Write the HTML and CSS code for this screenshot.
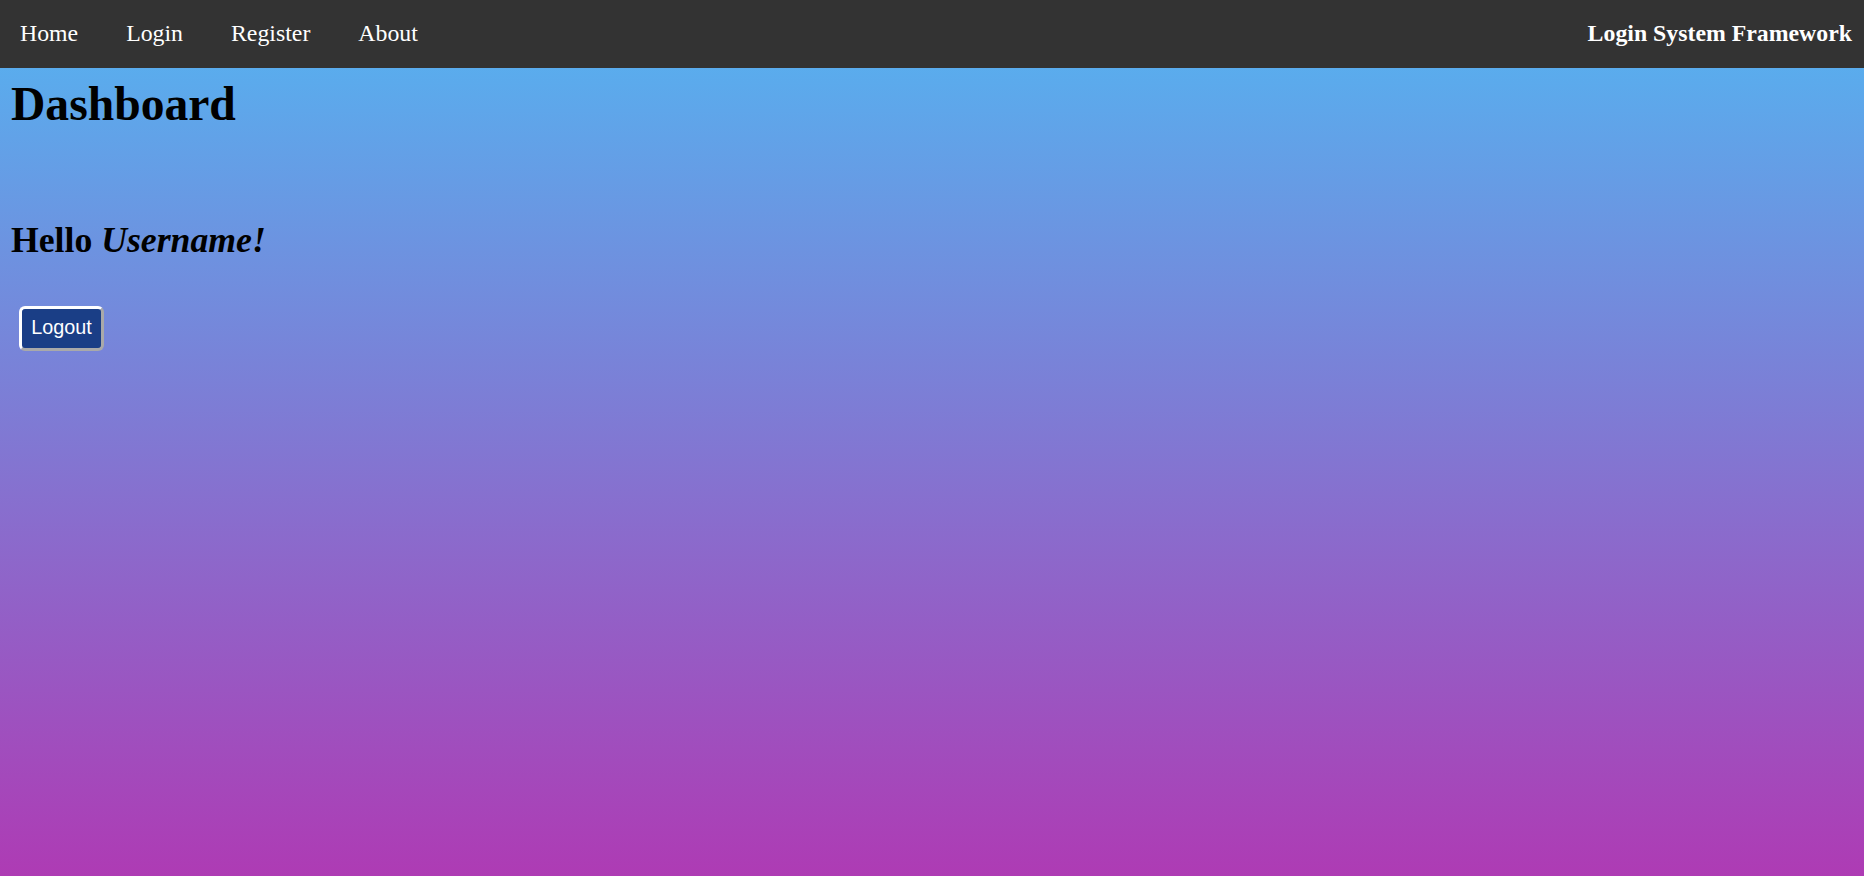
FILE: index.html
```html
<!DOCTYPE html>
<html lang="en">
<head>
<meta charset="utf-8">
<title>Dashboard</title>
<link rel="stylesheet" href="styles.css">
</head>
<body>
<nav class="topnav">
  <div class="nav-links">
    <a href="#" class="nav-link">Home</a>
    <a href="#" class="nav-link">Login</a>
    <a href="#" class="nav-link">Register</a>
    <a href="#" class="nav-link">About</a>
  </div>
  <div class="nav-title">Login System Framework</div>
</nav>
<main class="content">
  <h1 class="page-title">Dashboard</h1>
  <h2 class="greeting">Hello <em>Username!</em></h2>
  <button class="logout-btn" type="button">Logout</button>
</main>
</body>
</html>
```

FILE: styles.css
```css
html, body {
  margin: 0;
  padding: 0;
  height: 100%;
}

body {
  font-family: "Liberation Serif", "Times New Roman", serif;
  background: linear-gradient(to bottom, #5aaced 0%, #5aaced 7.7%, #ae3bb4 100%);
  min-height: 876px;
  color: #000;
}

.topnav {
  height: 68px;
  background: #333333;
  display: flex;
  align-items: center;
  justify-content: space-between;
  padding: 0 12px 0 20px;
}

.nav-links {
  display: flex;
  gap: 48px;
}

.nav-link {
  color: #ffffff;
  text-decoration: none;
  font-size: 23.8px;
  line-height: 1;
}

.nav-title {
  color: #ffffff;
  font-weight: bold;
  font-size: 23.8px;
  line-height: 1;
}

.content {
  padding-left: 11px;
}

.page-title {
  font-size: 47.6px;
  font-weight: bold;
  line-height: 1.15;
  margin: 8.6px 0 0 0;
}

.greeting {
  font-size: 35.7px;
  font-weight: bold;
  line-height: 1.15;
  margin: 88.8px 0 0 0;
}

.greeting em {
  font-style: italic;
}

.logout-btn {
  display: flex;
  align-items: center;
  justify-content: center;
  box-sizing: border-box;
  width: 85px;
  height: 45px;
  margin: 44.8px 0 0 8px;
  padding: 0 0 2px 0;
  background: #1a3e86;
  color: #ffffff;
  font-family: "Liberation Sans", Arial, sans-serif;
  font-size: 19.8px;
  border-style: solid;
  border-width: 3px;
  border-color: #ffffff #a9a9a9 #a9a9a9 #ffffff;
  border-radius: 6px;
}
```
